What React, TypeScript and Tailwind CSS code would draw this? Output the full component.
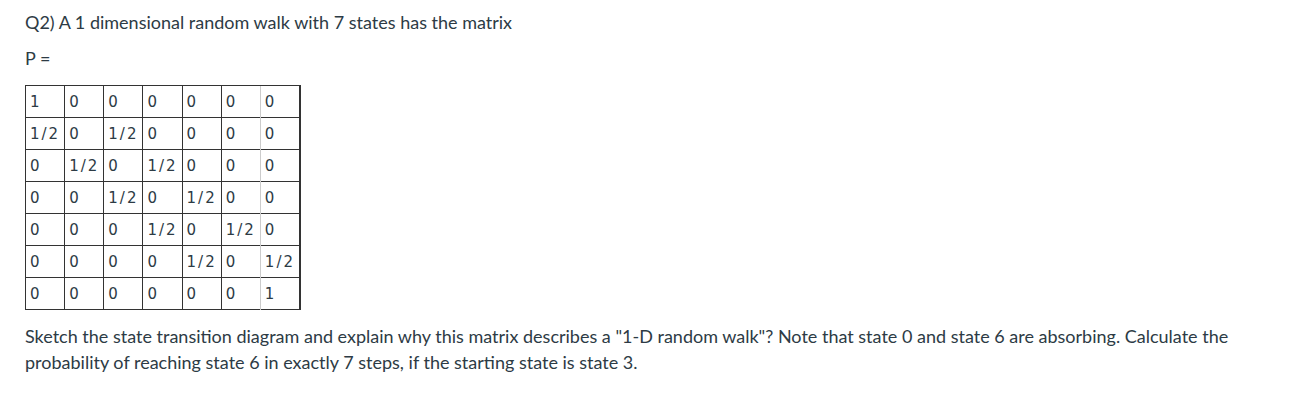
import React from "react";

const rows: string[][] = [
  ["1", "0", "0", "0", "0", "0", "0"],
  ["1/2", "0", "1/2", "0", "0", "0", "0"],
  ["0", "1/2", "0", "1/2", "0", "0", "0"],
  ["0", "0", "1/2", "0", "1/2", "0", "0"],
  ["0", "0", "0", "1/2", "0", "1/2", "0"],
  ["0", "0", "0", "0", "1/2", "0", "1/2"],
  ["0", "0", "0", "0", "0", "0", "1"],
];

export default function App() {
  return (
    <div className="min-h-[416px] w-[1296px] bg-white px-[25px] pt-[9px] text-[#2d3b45] [font-family:Lato,'Liberation_Sans',sans-serif] text-[18px] leading-[26px]">
      <p>Q2) A 1 dimensional random walk with 7 states has the matrix</p>
      <p className="mt-[10px]">P =</p>
      <table className="mt-[14px] border-collapse border-r-2 border-b border-[#333] [font-family:'DejaVu_Sans',Verdana,sans-serif] text-[15px] leading-[16px] tracking-[2px]">
        <tbody>
          {rows.map((r, i) => (
            <tr key={i} className="h-[32px]">
              {r.map((c, j) => (
                <td
                  key={j}
                  className={
                    "border-t border-[#333] px-[4px] align-middle whitespace-nowrap " +
                    (j === 6 ? "w-[38px] border-l border-l-[#ccc]" : "w-[39px] border-l border-l-[#333]")
                  }
                >
                  {c}
                </td>
              ))}
            </tr>
          ))}
        </tbody>
      </table>
      <p className="mt-[13px]">
        Sketch the state transition diagram and explain why this matrix describes a "1-D random walk"? Note that state 0 and state 6 are absorbing. Calculate the
        <br />
        probability of reaching state 6 in exactly 7 steps, if the starting state is state 3.
      </p>
    </div>
  );
}
